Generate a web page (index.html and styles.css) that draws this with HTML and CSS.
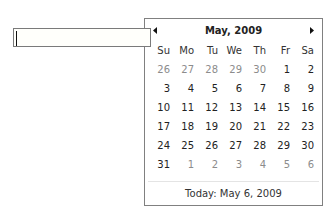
FILE: index.html
```html
<!DOCTYPE html>
<html lang="en">
<head>
    <meta charset="UTF-8">
    <title>Date picker</title>
    <link rel="stylesheet" href="styles.css">
</head>
<body>
    <div class="field"><span class="caret"></span></div>

    <div class="calendar">
        <div class="cal-head">
            <svg class="nav" width="4" height="7" viewBox="0 0 4 7"><path d="M4 0 L0 3.5 L4 7 Z" fill="#111"/></svg>
            <span class="cal-title">May, 2009</span>
            <svg class="nav" width="4" height="7" viewBox="0 0 4 7"><path d="M0 0 L4 3.5 L0 7 Z" fill="#111"/></svg>
        </div>
        <div class="cal-grid">
            <span class="dow">Su</span><span class="dow">Mo</span><span class="dow">Tu</span><span class="dow">We</span><span class="dow">Th</span><span class="dow">Fr</span><span class="dow">Sa</span>
            <span class="day other">26</span><span class="day other">27</span><span class="day other">28</span><span class="day other">29</span><span class="day other">30</span><span class="day">1</span><span class="day">2</span>
            <span class="day">3</span><span class="day">4</span><span class="day">5</span><span class="day">6</span><span class="day">7</span><span class="day">8</span><span class="day">9</span>
            <span class="day">10</span><span class="day">11</span><span class="day">12</span><span class="day">13</span><span class="day">14</span><span class="day">15</span><span class="day">16</span>
            <span class="day">17</span><span class="day">18</span><span class="day">19</span><span class="day">20</span><span class="day">21</span><span class="day">22</span><span class="day">23</span>
            <span class="day">24</span><span class="day">25</span><span class="day">26</span><span class="day">27</span><span class="day">28</span><span class="day">29</span><span class="day">30</span>
            <span class="day">31</span><span class="day other">1</span><span class="day other">2</span><span class="day other">3</span><span class="day other">4</span><span class="day other">5</span><span class="day other">6</span>
        </div>
        <div class="cal-foot">Today: May 6, 2009</div>
    </div>
</body>
</html>
```

FILE: styles.css
```css
* {
    margin: 0;
    padding: 0;
    box-sizing: border-box;
}

body {
    background: #fff;
    color: #222;
    font-family: "DejaVu Sans", Verdana, sans-serif;
    font-size: 10px;
    padding: 28px 0 0 13px;
}

/* text box with the caret */
.field {
    position: relative;
    z-index: 2;
    width: 138px;
    height: 19px;
    border: 1px solid #7a7a7a;
    background: #fffffb;
    padding: 2px 0 0 2px;
}

.caret {
    display: block;
    width: 1px;
    height: 15px;
    background: #111;
}

/* dropdown calendar */
.calendar {
    position: absolute;
    left: 144px;
    top: 18px;
    z-index: 1;
    width: 179px;
    border: 1px solid #808080;
    background: #fff;
}

.cal-head {
    height: 22px;
    display: flex;
    align-items: center;
    justify-content: space-between;
    padding: 0 8px 0 8px;
}

.cal-title {
    font-weight: bold;
    color: #222;
}

.cal-grid {
    display: grid;
    grid-template-columns: repeat(7, 24px);
    grid-auto-rows: 19px;
    padding-left: 3px;
    margin-bottom: 7px;
}

.cal-grid span {
    display: flex;
    align-items: center;
    justify-content: flex-end;
    padding-right: 2px;
}

.dow {
    color: #333;
}

.day {
    color: #222;
}

.day.other {
    color: #8c8c8c;
}

.cal-foot {
    height: 24px;
    margin: 0 3px;
    border-top: 1px solid #e4e4e4;
    display: flex;
    align-items: center;
    justify-content: center;
    color: #333;
}
```
